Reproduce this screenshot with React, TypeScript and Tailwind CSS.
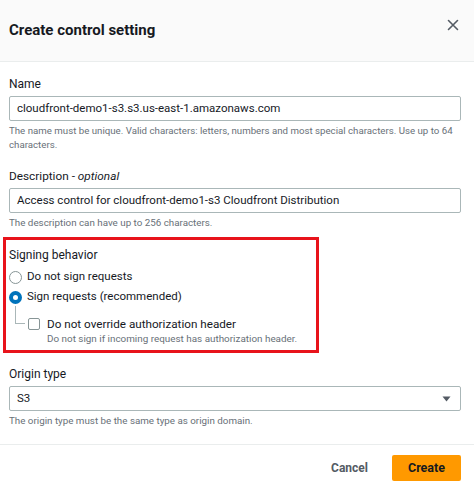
import React from "react";

export default function App() {
  return (
    <div
      className="w-[474px] h-[489px] bg-white text-[#16191f] overflow-hidden"
      style={{ fontFamily: 'Roboto, "Open Sans", Arial, sans-serif' }}
    >
      {/* Header */}
      <div className="h-[62px] bg-[#fafafa] border-b border-[#eaeded] flex items-center justify-between pl-[9px] pr-[15px]">
        <h1 className="text-[15px] font-bold leading-none">Create control setting</h1>
        <svg width="12" height="12" viewBox="0 0 12 12" className="mb-[12px]">
          <path d="M1.5 1.5 L10.5 10.5 M10.5 1.5 L1.5 10.5" stroke="#545b64" strokeWidth="1.6" strokeLinecap="round" />
        </svg>
      </div>

      {/* Body */}
      <div className="pl-[9px] pr-[13px] pt-[14px]">
        {/* Name */}
        <div className="text-[12px] leading-[16px]">Name</div>
        <div className="mt-[4px] h-[25px] border border-[#aab7b8] rounded-[2px] flex items-center px-[7px] text-[11.5px]">
          cloudfront-demo1-s3.s3.us-east-1.amazonaws.com
        </div>
        <div className="mt-[3px] text-[9.7px] leading-[14px] text-[#687078]">
          The name must be unique. Valid characters: letters, numbers and most special characters. Use up to 64 characters.
        </div>

        {/* Description */}
        <div className="mt-[16px] text-[11.8px] leading-[16px]">
          Description - <i>optional</i>
        </div>
        <div className="mt-[4px] h-[25px] border border-[#aab7b8] rounded-[2px] flex items-center px-[7px] text-[11.5px]">
          Access control for cloudfront-demo1-s3 Cloudfront Distribution
        </div>
        <div className="mt-[3px] text-[9.8px] leading-[14px] text-[#687078]">
          The description can have up to 256 characters.
        </div>

        {/* Signing behavior */}
        <div className="-ml-[6px] mt-[7px] w-[316px] border-[3px] border-[#e8131b] pl-[3px] pt-[7px] pb-[4px]">
          <div className="text-[12px] leading-[16px]">Signing behavior</div>
          <div className="mt-[5px] flex items-center gap-[5px] h-[18px]">
            <span className="w-[13px] h-[13px] rounded-full border-[1.5px] border-[#879596] bg-white" />
            <span className="text-[11.5px]">Do not sign requests</span>
          </div>
          <div className="mt-[2px] flex items-center gap-[5px] h-[18px]">
            <span className="w-[13px] h-[13px] rounded-full border-[4px] border-[#0073bb] bg-white" />
            <span className="text-[11.5px]">Sign requests (recommended)</span>
          </div>
          <div className="flex">
            <div className="w-[19px] pl-[6px]">
              <div className="w-[10px] h-[18px] border-l border-b border-[#aab7b8]" />
            </div>
            <div className="pt-[10px]">
              <div className="flex items-center gap-[7px]">
                <span className="w-[12px] h-[12px] border border-[#879596] rounded-[2px] bg-white" />
                <span className="text-[11.7px] leading-[16px]">Do not override authorization header</span>
              </div>
              <div className="ml-[19px] text-[9.9px] leading-[14px] text-[#687078]">
                Do not sign if incoming request has authorization header.
              </div>
            </div>
          </div>
        </div>

        {/* Origin type */}
        <div className="mt-[13px] text-[12px] leading-[16px]">Origin type</div>
        <div className="mt-[4px] h-[25px] border border-[#aab7b8] rounded-[2px] flex items-center justify-between pl-[7px] pr-[9px] text-[11.5px]">
          <span>S3</span>
          <svg width="9" height="6" viewBox="0 0 9 6">
            <path d="M0.5 0.5 L8.5 0.5 L4.5 5.5 Z" fill="#545b64" />
          </svg>
        </div>
        <div className="mt-[3px] text-[9.8px] leading-[14px] text-[#687078]">
          The origin type must be the same type as origin domain.
        </div>
      </div>

      {/* Footer */}
      <div className="mt-[16px] border-t border-[#eaeded] flex justify-end items-center gap-[24px] pr-[13px] pt-[10px]">
        <span className="text-[12px] font-bold text-[#545b64]">Cancel</span>
        <button className="w-[69px] h-[26px] bg-[#ff9900] rounded-[2px] text-[12.5px] font-bold text-[#16191f]">
          Create
        </button>
      </div>
    </div>
  );
}
